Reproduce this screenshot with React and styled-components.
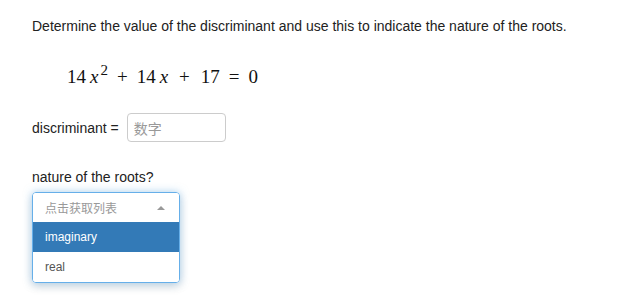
import React from "react";
import styled, { createGlobalStyle } from "styled-components";

const Global = createGlobalStyle`
  html, body { margin: 0; padding: 0; background: #fff; }
  body { font-family: "Liberation Sans", Arial, sans-serif; color: #222; }
`;

const Page = styled.div`
  padding: 16px 32px;
  display: flex;
  flex-direction: column;
  align-items: flex-start;
`;

const Question = styled.p`
  margin: 0;
  font-size: 14px;
  line-height: 20px;
  color: #222;
`;

const MathLine = styled.div`
  margin: 26px 0 0 35px;
  height: 30px;
  font-family: "Liberation Serif", "DejaVu Serif", serif;
  font-size: 19px;
  line-height: 30px;
  color: #111;
  white-space: nowrap;
`;

const Var = styled.span`
  font-style: italic;
  margin-left: 4px;
`;

const Sup = styled.sup`
  font-size: 15px;
  vertical-align: 8px;
  line-height: 0;
  margin-left: 2px;
`;

const Op = styled.span`
  margin: 0 ${p => (p.$wide ? "11px" : "9px")};
`;

const FieldRow = styled.div`
  margin-top: 21px;
  display: flex;
  align-items: center;
  gap: 8px;
  font-size: 14px;
`;

const Input = styled.div`
  width: 99px;
  height: 29px;
  box-sizing: border-box;
  border: 1px solid #ccc;
  border-radius: 4px;
  padding: 0 6px;
  display: flex;
  align-items: center;
  color: #999;
  font-family: "Liberation Sans", "Noto Sans CJK SC", sans-serif;
  font-size: 14px;
`;

const Label = styled.div`
  margin-top: 25px;
  font-size: 14px;
  line-height: 20px;
`;

const Select = styled.div`
  margin-top: 5px;
  width: 148px;
  box-sizing: border-box;
  border: 1px solid #66afe9;
  border-radius: 4px;
  box-shadow: 0 0 8px rgba(102, 175, 233, 0.5), 0 4px 10px rgba(0,0,0,0.12);
  overflow: hidden;
  font-size: 12px;
`;

const Option = styled.div`
  height: ${p => (p.$placeholder ? "29px" : "30px")};
  display: flex;
  align-items: center;
  justify-content: space-between;
  padding: 0 12px;
  background: ${p => (p.$active ? "#337ab7" : "#fff")};
  color: ${p => (p.$active ? "#fff" : p.$placeholder ? "#999" : "#555")};
  font-family: "Liberation Sans", "Noto Sans CJK SC", sans-serif;
`;

const Caret = styled.span`
  width: 0;
  height: 0;
  border-left: 4px solid transparent;
  border-right: 4px solid transparent;
  border-bottom: 4px solid #999;
  margin-right: 2px;
`;

export default function App() {
  return (
    <>
      <Global />
      <Page>
        <Question>
          Determine the value of the discriminant and use this to indicate the nature of the roots.
        </Question>
        <MathLine>
          <span>14</span>
          <Var>x</Var>
          <Sup>2</Sup>
          <Op>+</Op>
          <span>14</span>
          <Var>x</Var>
          <Op $wide>+</Op>
          <span>17</span>
          <Op>=</Op>
          <span>0</span>
        </MathLine>
        <FieldRow>
          <span>discriminant =</span>
          <Input>数字</Input>
        </FieldRow>
        <Label>nature of the roots?</Label>
        <Select>
          <Option $placeholder>
            点击获取列表
            <Caret />
          </Option>
          <Option $active>imaginary</Option>
          <Option>real</Option>
        </Select>
      </Page>
    </>
  );
}
